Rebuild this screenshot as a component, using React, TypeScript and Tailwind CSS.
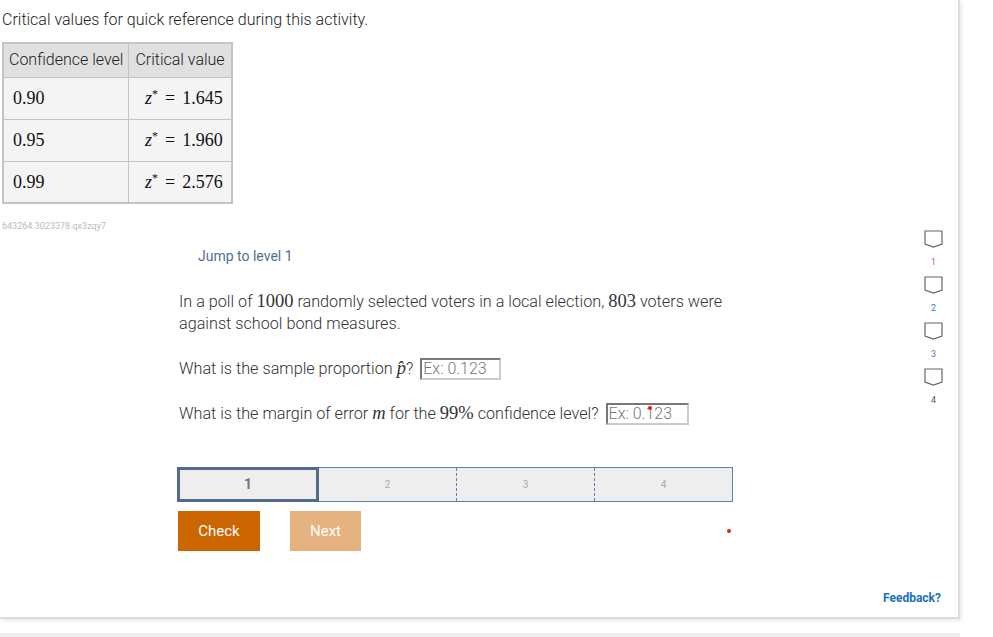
import React from "react";

const sans = { fontFamily: "Roboto, 'Noto Sans', sans-serif" };
const serif = "font-['Liberation_Serif',serif]";

function LevelIcon({ n, color }: { n: number; color: string }) {
  return (
    <div className="flex flex-col items-center">
      <svg width="19" height="18" viewBox="0 0 19 18" fill="none">
        <path d="M1 1 H18 V14 L9.5 17 L1 14 Z" stroke="#666" strokeWidth="1.2" fill="#fff" />
      </svg>
      <span className={`mt-[9px] text-[9px] leading-[10px] ${color}`}>{n}</span>
    </div>
  );
}

function Row({ level, z }: { level: string; z: string }) {
  return (
    <tr className="h-[42px] bg-[#f4f4f4]">
      <td className={`border border-[#c4c4c4] pl-[9px] text-[18px] leading-[22px] text-[#111] ${serif}`}>{level}</td>
      <td className={`border border-[#c4c4c4] pr-[8px] text-right text-[18px] leading-[22px] text-[#111] ${serif}`}>
        <i>z</i>
        <sup className="text-[12px] leading-none">*</sup>
        <span className="mx-[7px]">=</span>
        {z}
      </td>
    </tr>
  );
}

const math = `text-[18.5px] leading-[20px] ${serif}`;

export default function App() {
  return (
    <div className="min-h-[637px] w-[993px] bg-white" style={sans}>
      <div className="w-[960px] border-b-[2px] border-r-[2px] border-[#dcdcdc] bg-white pl-[2px] shadow-[2px_2px_3px_rgba(0,0,0,0.08)]">
        <p className="pt-[10px] text-[16px] font-light leading-[20px] text-[#222]">
          Critical values for quick reference during this activity.
        </p>
        <table className="mt-[12px] border-collapse border-[2px] border-[#c4c4c4]">
          <thead>
            <tr className="h-[34px] bg-[#e0e0e0]">
              <th className="whitespace-nowrap border border-[#c4c4c4] px-[5px] text-left text-[16px] font-light leading-[20px] text-[#222]">
                Confidence level
              </th>
              <th className="whitespace-nowrap border border-[#c4c4c4] px-[6px] text-left text-[16px] font-light leading-[20px] text-[#222]">
                Critical value
              </th>
            </tr>
          </thead>
          <tbody>
            <Row level="0.90" z="1.645" />
            <Row level="0.95" z="1.960" />
            <Row level="0.99" z="2.576" />
          </tbody>
        </table>
        <p className="mt-[17px] text-[9px] leading-[10px] text-[#bbb]">643264.3023378.qx3zqy7</p>

        <div className="flex">
          <div className="flex-1 pl-[175px]">
            <p className="mt-[15px] pl-[21px] text-[14px] leading-[20px] text-[#4f6f8f]">Jump to level 1</p>
            <p className="mt-[25px] w-[556px] pl-[2px] text-[16.2px] font-light leading-[22px] text-[#333]">
              In a poll of <span className={math}>1000</span> randomly selected voters in a local election,{" "}
              <span className={math}>803</span> voters were against school bond measures.
            </p>
            <div className="mt-[23px] flex h-[22px] items-center pl-[2px] text-[16.2px] font-light leading-[22px] text-[#333]">
              <span>
                What is the sample proportion <i className={math}>p̂</i>?
              </span>
              <div className="ml-[7px] flex h-[22px] w-[81px] items-center border-[2px] border-[#777] border-b-[#ccc] border-r-[#ccc] pl-[1px] text-[16px] font-light text-[#777]">
                Ex: 0.123
              </div>
            </div>
            <div className="mt-[23px] flex h-[22px] items-center pl-[2px] text-[16.2px] font-light leading-[22px] text-[#333]">
              <span>
                What is the margin of error <i className={math}>m</i> for the <span className={math}>99%</span>{" "}
                confidence level?
              </span>
              <div className="relative ml-[7px] flex h-[22px] w-[83px] items-center border-[2px] border-[#777] border-b-[#ccc] border-r-[#ccc] pl-[1px] text-[16px] font-light text-[#777]">
                Ex: 0.123
                <span className="absolute left-[40px] top-[1px] h-[4px] w-[4px] rounded-full bg-[#e0201a]" />
              </div>
            </div>

            <div className="mt-[42px] flex h-[35px] w-[556px] bg-[#eeeeee]">
              <div className="flex w-[142px] items-center justify-center border-[3px] border-[#536a8a] text-[14px] font-bold text-[#777]">
                1
              </div>
              <div className="flex flex-1 border-y border-r border-[#5b82ab]">
                <div className="flex flex-1 items-center justify-center border-r border-dashed border-[#5b82ab] text-[10px] text-[#aaa]">
                  2
                </div>
                <div className="flex flex-1 items-center justify-center border-r border-dashed border-[#5b82ab] text-[10px] text-[#aaa]">
                  3
                </div>
                <div className="flex flex-1 items-center justify-center text-[10px] text-[#aaa]">4</div>
              </div>
            </div>

            <div className="mt-[9px] flex w-[556px] items-center">
              <button className="ml-[1px] h-[40px] w-[82px] bg-[#cc6600] text-[15px] text-white">Check</button>
              <button className="ml-[30px] h-[40px] w-[71px] bg-[#e6b280] text-[15px] text-white">Next</button>
              <span className="ml-auto mr-[2px] h-[4px] w-[4px] rounded-full bg-[#e0201a]" />
            </div>
          </div>

          <div className="mr-[15px] mt-[-1px] flex flex-col gap-[9px]">
            <LevelIcon n={1} color="text-[#e05050]" />
            <LevelIcon n={2} color="text-[#4a7ab0]" />
            <LevelIcon n={3} color="text-[#4a7ab0]" />
            <LevelIcon n={4} color="text-[#555]" />
          </div>
        </div>

        <div className="flex justify-end pb-[11px] pr-[17px] pt-[39px]">
          <span className="text-[12px] font-bold leading-[16px] text-[#1d70b8]">Feedback?</span>
        </div>
      </div>
      <div className="mt-[14px] h-[6px] w-[960px] bg-[#eeeeee]" />
    </div>
  );
}
